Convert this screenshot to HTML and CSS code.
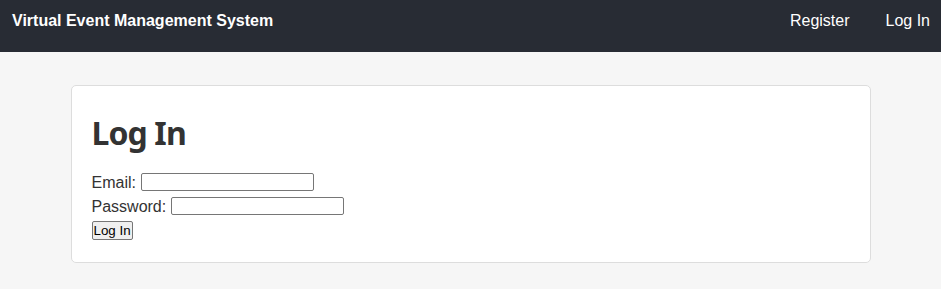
FILE: index.html
```html
<!DOCTYPE html>
<html>
<head>
<meta charset="utf-8">
<link rel="stylesheet" href="styles.css">
</head>
<body>
<nav class="navbar">
  <span class="brand">Virtual Event Management System</span>
  <div class="links">
    <a class="link" href="#">Register</a>
    <a class="link" href="#">Log In</a>
  </div>
</nav>
<main class="main">
  <div class="card">
    <h1 class="title">Log In</h1>
    <form class="form">
      <div class="row"><label>Email: </label><input class="field field-email" type="email"></div>
      <div class="row"><label>Password: </label><input class="field" type="password"></div>
      <div class="row btnrow"><button class="btn" type="button">Log In</button></div>
    </form>
  </div>
</main>
</body>
</html>
```

FILE: styles.css
```css
html, body {
  margin: 0;
  padding: 0;
}
body {
  background: #f6f6f6;
  font-family: "Liberation Sans", Arial, sans-serif;
  font-size: 16px;
  color: #333;
}
.navbar {
  background: #282c34;
  height: 52px;
  box-sizing: border-box;
  padding: 12px 11px 0 12px;
  display: flex;
  justify-content: space-between;
  align-items: flex-start;
  line-height: 18px;
}
.brand {
  color: #fff;
  font-weight: bold;
}
.links {
  display: flex;
  gap: 36px;
}
.link {
  color: #fff;
  text-decoration: none;
}
.main {
  padding-top: 33px;
}
.card {
  max-width: 800px;
  margin: 0 auto;
  box-sizing: border-box;
  background: #fff;
  border: 1px solid #ddd;
  border-radius: 5px;
  padding: 20px;
}
.title {
  font-family: "Noto Sans", "Open Sans", sans-serif;
  font-size: 32px;
  font-weight: bold;
  letter-spacing: -0.9px;
  margin: 7px 0 18px 0;
  line-height: 40px;
  color: #333;
}
.form {
  margin: 0;
}
.row {
  line-height: 24px;
  height: 24px;
}
.field {
  width: 173px;
  height: 18px;
  box-sizing: border-box;
  border: 1px solid #767676;
  border-radius: 2px;
  padding: 1px 2px;
  vertical-align: middle;
  margin: -4px 0 0 0;
  font-size: 13.33px;
}
.field-email {
  margin-left: 1px;
}
.btnrow {
  height: 23px;
}
.btn {
  font-family: "Liberation Sans", Arial, sans-serif;
  font-size: 13.33px;
  height: 19px;
  padding: 0 1px;
  border: 1px solid #767676;
  border-radius: 2px;
  background: #efefef;
  color: #000;
  line-height: 15px;
  position: relative;
  top: -1px;
}
```
